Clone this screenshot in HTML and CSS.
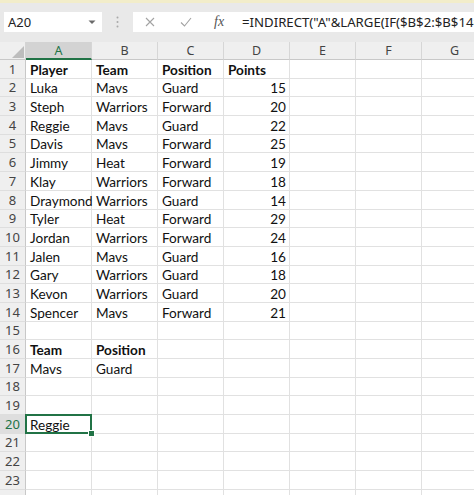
FILE: index.html
```html
<!DOCTYPE html>
<html>
<head>
<meta charset="utf-8">
<link rel="stylesheet" href="styles.css">
</head>
<body>
<div class="app">
  <div class="topline"></div>
  <div class="fbar">
    <div class="namebox">
      <span>A20</span>
      <svg class="dd" width="8" height="5" viewBox="0 0 8 5"><path d="M0.5 0.5 L4 4 L7.5 0.5 Z" fill="#6a6a6a"/></svg>
    </div>
    <div class="grip">
      <svg width="3" height="12" viewBox="0 0 3 12"><circle cx="1.5" cy="1.5" r="1" fill="#a9a9a9"/><circle cx="1.5" cy="6" r="1" fill="#a9a9a9"/><circle cx="1.5" cy="10.5" r="1" fill="#a9a9a9"/></svg>
    </div>
    <div class="formula">
      <div class="fbtns">
        <svg class="ix" width="10" height="10" viewBox="0 0 10 10"><path d="M1 1 L9 9 M9 1 L1 9" stroke="#a3a3a3" stroke-width="1.1" fill="none"/></svg>
        <svg class="ic" width="12" height="10" viewBox="0 0 12 10"><path d="M1 5.5 L4.5 9 L11 1" stroke="#a3a3a3" stroke-width="1.1" fill="none"/></svg>
        <span class="fx">fx</span>
      </div>
      <div class="ftext">=INDIRECT("A"&amp;LARGE(IF($B$2:$B$14=A17,IF($C$2:$C$14=B17,ROW($D$2:$D$14)-1)),1)+1)</div>
    </div>
  </div>

  <div class="sheet">
    <div class="corner"><svg width="14" height="14" viewBox="0 0 14 14"><path d="M13 1 L13 13 L1 13 Z" fill="#bdbdbd"/></svg></div>
    <div class="ch sel">A</div><div class="ch">B</div><div class="ch">C</div><div class="ch">D</div><div class="ch">E</div><div class="ch">F</div><div class="ch">G</div>

    <div class="rh">1</div><div class="c b">Player</div><div class="c b">Team</div><div class="c b">Position</div><div class="c b">Points</div><div class="c"></div><div class="c"></div><div class="c"></div>
    <div class="rh">2</div><div class="c">Luka</div><div class="c">Mavs</div><div class="c">Guard</div><div class="c n">15</div><div class="c"></div><div class="c"></div><div class="c"></div>
    <div class="rh">3</div><div class="c">Steph</div><div class="c">Warriors</div><div class="c">Forward</div><div class="c n">20</div><div class="c"></div><div class="c"></div><div class="c"></div>
    <div class="rh">4</div><div class="c">Reggie</div><div class="c">Mavs</div><div class="c">Guard</div><div class="c n">22</div><div class="c"></div><div class="c"></div><div class="c"></div>
    <div class="rh">5</div><div class="c">Davis</div><div class="c">Mavs</div><div class="c">Forward</div><div class="c n">25</div><div class="c"></div><div class="c"></div><div class="c"></div>
    <div class="rh">6</div><div class="c">Jimmy</div><div class="c">Heat</div><div class="c">Forward</div><div class="c n">19</div><div class="c"></div><div class="c"></div><div class="c"></div>
    <div class="rh">7</div><div class="c">Klay</div><div class="c">Warriors</div><div class="c">Forward</div><div class="c n">18</div><div class="c"></div><div class="c"></div><div class="c"></div>
    <div class="rh">8</div><div class="c">Draymond</div><div class="c">Warriors</div><div class="c">Guard</div><div class="c n">14</div><div class="c"></div><div class="c"></div><div class="c"></div>
    <div class="rh">9</div><div class="c">Tyler</div><div class="c">Heat</div><div class="c">Forward</div><div class="c n">29</div><div class="c"></div><div class="c"></div><div class="c"></div>
    <div class="rh">10</div><div class="c">Jordan</div><div class="c">Warriors</div><div class="c">Forward</div><div class="c n">24</div><div class="c"></div><div class="c"></div><div class="c"></div>
    <div class="rh">11</div><div class="c">Jalen</div><div class="c">Mavs</div><div class="c">Guard</div><div class="c n">16</div><div class="c"></div><div class="c"></div><div class="c"></div>
    <div class="rh">12</div><div class="c">Gary</div><div class="c">Warriors</div><div class="c">Guard</div><div class="c n">18</div><div class="c"></div><div class="c"></div><div class="c"></div>
    <div class="rh">13</div><div class="c">Kevon</div><div class="c">Warriors</div><div class="c">Guard</div><div class="c n">20</div><div class="c"></div><div class="c"></div><div class="c"></div>
    <div class="rh">14</div><div class="c">Spencer</div><div class="c">Mavs</div><div class="c">Forward</div><div class="c n">21</div><div class="c"></div><div class="c"></div><div class="c"></div>
    <div class="rh">15</div><div class="c"></div><div class="c"></div><div class="c"></div><div class="c"></div><div class="c"></div><div class="c"></div><div class="c"></div>
    <div class="rh">16</div><div class="c b">Team</div><div class="c b">Position</div><div class="c"></div><div class="c"></div><div class="c"></div><div class="c"></div><div class="c"></div>
    <div class="rh">17</div><div class="c">Mavs</div><div class="c">Guard</div><div class="c"></div><div class="c"></div><div class="c"></div><div class="c"></div><div class="c"></div>
    <div class="rh">18</div><div class="c"></div><div class="c"></div><div class="c"></div><div class="c"></div><div class="c"></div><div class="c"></div><div class="c"></div>
    <div class="rh">19</div><div class="c"></div><div class="c"></div><div class="c"></div><div class="c"></div><div class="c"></div><div class="c"></div><div class="c"></div>
    <div class="rh rsel">20</div><div class="c active">Reggie<span class="handle"></span></div><div class="c"></div><div class="c"></div><div class="c"></div><div class="c"></div><div class="c"></div><div class="c"></div>
    <div class="rh">21</div><div class="c"></div><div class="c"></div><div class="c"></div><div class="c"></div><div class="c"></div><div class="c"></div><div class="c"></div>
    <div class="rh">22</div><div class="c"></div><div class="c"></div><div class="c"></div><div class="c"></div><div class="c"></div><div class="c"></div><div class="c"></div>
    <div class="rh">23</div><div class="c"></div><div class="c"></div><div class="c"></div><div class="c"></div><div class="c"></div><div class="c"></div><div class="c"></div>
    <div class="rh"></div><div class="c"></div><div class="c"></div><div class="c"></div><div class="c"></div><div class="c"></div><div class="c"></div><div class="c"></div>
  </div>
</div>
</body>
</html>
```

FILE: styles.css
```css
html, body {
  margin: 0;
  padding: 0;
  background: #fff;
  overflow: hidden;
}
.app {
  width: 474px;
  height: 495px;
  overflow: hidden;
}
.topline {
  height: 3px;
  background: #f2edca;
}
.fbar {
  display: flex;
  align-items: center;
  height: 39px;
  box-sizing: border-box;
  padding: 9px 0 10px 4px;
  background: #e9e9e9;
}
.namebox {
  width: 98px;
  height: 20px;
  flex: none;
  box-sizing: border-box;
  background: #fff;
  display: flex;
  align-items: center;
  justify-content: space-between;
  padding: 0 6px 0 4px;
  font: 13px "Noto Sans", "Open Sans", sans-serif;
  color: #222;
}
.grip {
  width: 31px;
  flex: none;
  display: flex;
  justify-content: center;
  align-items: center;
}
.formula {
  flex: 1;
  min-width: 0;
  height: 20px;
  background: #fff;
  display: flex;
  align-items: center;
  overflow: hidden;
}
.fbtns {
  flex: none;
  display: flex;
  align-items: center;
  padding-left: 12px;
  width: 109px;
  box-sizing: border-box;
}
.ix { margin-right: 25px; }
.ic { margin-right: 22px; }
.fx {
  font: italic 14px "Liberation Serif", "DejaVu Serif", serif;
  color: #555;
  width: 13px;
  line-height: 14px;
}
.ftext {
  flex: none;
  white-space: nowrap;
  font: 13.2px "Noto Sans", "Open Sans", sans-serif;
  color: #222;
}
.sheet {
  display: grid;
  grid-template-columns: 26px repeat(7, 66px);
  grid-template-rows: 18px repeat(24, 18.7px);
}
.corner {
  background: #efefef;
  border-right: 1px solid #d4d4d4;
  border-bottom: 1px solid #c8c8c8;
  display: flex;
  justify-content: flex-end;
  align-items: flex-end;
  box-sizing: border-box;
}
.ch {
  background: #efefef;
  border-right: 1px solid #d6d6d6;
  border-bottom: 1px solid #c8c8c8;
  box-sizing: border-box;
  display: flex;
  justify-content: center;
  align-items: center;
  font: 12.5px "Noto Sans", "Open Sans", sans-serif;
  color: #444;
}
.ch.sel {
  background: #d3d3d3;
  color: #217346;
  border-bottom: 2px solid #217346;
}
.rh {
  background: #efefef;
  border-right: 1px solid #c8c8c8;
  border-bottom: 1px solid #dedede;
  box-sizing: border-box;
  display: flex;
  justify-content: center;
  align-items: flex-end;
  font: 13px "Noto Sans", "Open Sans", sans-serif;
  line-height: 17px;
  color: #444;
}
.rh.rsel {
  background: #dedede;
  color: #217346;
}
.c {
  border-right: 1px solid #e1e1e1;
  border-bottom: 1px solid #e1e1e1;
  box-sizing: border-box;
  display: flex;
  align-items: flex-end;
  padding: 0 3px 0 4px;
  font: 13.6px "Lato", "Open Sans", sans-serif;
  line-height: 16px;
  color: #111;
  white-space: nowrap;
  overflow: visible;
}
.c.b { font-weight: bold; }
.c.n { justify-content: flex-end; padding-right: 3px; }
.c.active {
  position: relative;
}
.c.active::after {
  content: "";
  position: absolute;
  left: -1px;
  top: -1px;
  right: -1px;
  bottom: -1px;
  border: 2px solid #217346;
}
.handle {
  position: absolute;
  right: -4px;
  bottom: -4px;
  width: 5px;
  height: 5px;
  background: #217346;
  border: 1px solid #fff;
  z-index: 2;
}
```
